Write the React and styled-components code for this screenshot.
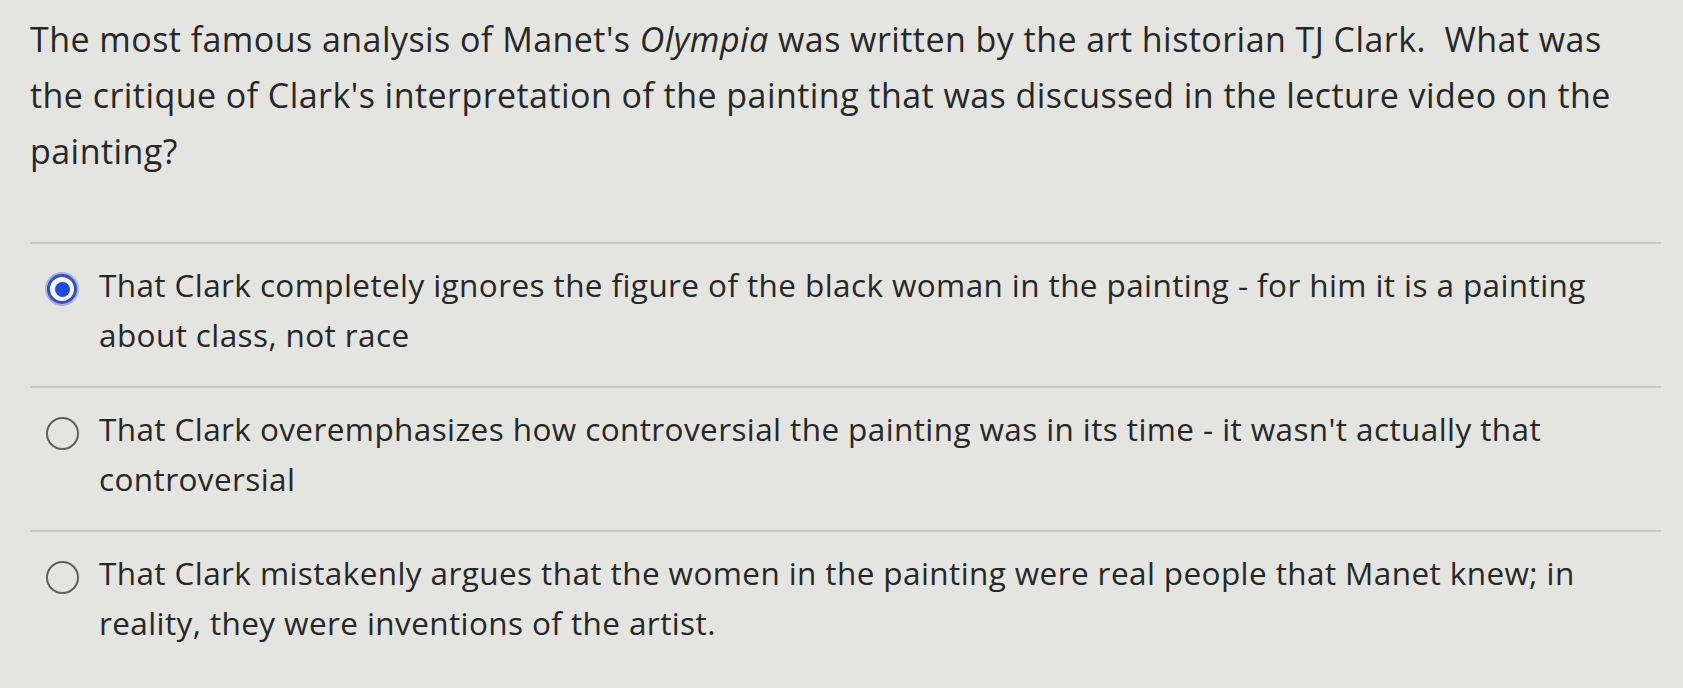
import React from 'react';
import styled, { createGlobalStyle } from 'styled-components';

const GlobalStyle = createGlobalStyle`
  html, body {
    margin: 0;
    padding: 0;
    background: #e4e4e1;
  }
  body {
    font-family: "Open Sans", "Liberation Sans", sans-serif;
    color: #272727;
  }
`

const Container = styled.div`
  width: 1683px;
  height: 688px;
  box-sizing: border-box;
  padding: 11px 22px 0 30px;
  overflow: hidden;
`

const Question = styled.div`
  font-size: 34px;
  line-height: 56px;
  letter-spacing: 0.45px;
  padding-right: 10px;
  margin-bottom: 63px;
`

const OptionList = styled.div`
  display: flex;
  flex-direction: column;
`

const Option = styled.label`
  display: flex;
  align-items: flex-start;
  border-top: 2px solid #c6c6c3;
  padding: 16px 20px 26px 15px;
  font-size: 31.5px;
  line-height: 50px;
  letter-spacing: 0.4px;
  cursor: pointer;
`

const RadioBox = styled.span`
  flex: 0 0 auto;
  width: 34px;
  height: 50px;
  margin-top: 4px;
  margin-right: 20px;
  display: flex;
  align-items: center;
  justify-content: center;
`

const Radio = styled.span`
  box-sizing: border-box;
  width: ${props => props.$checked ? '30px' : '33px'};
  height: ${props => props.$checked ? '30px' : '33px'};
  border-radius: 50%;
  border: ${props => props.$checked ? '3px solid #3b50b4' : '2px solid #5e5e5e'};
  background: ${props => props.$checked ? '#f5f5f8' : 'transparent'};
  box-shadow: ${props => props.$checked ? '0 0 0 2px #a3b2e4' : 'none'};
  display: flex;
  align-items: center;
  justify-content: center;
`

const Dot = styled.span`
  width: 15px;
  height: 15px;
  border-radius: 50%;
  background: #1b4de0;
`

const OptionText = styled.span``

const options = [
  'That Clark completely ignores the figure of the black woman in the painting - for him it is a painting about class, not race',
  "That Clark overemphasizes how controversial the painting was in its time - it wasn't actually that controversial",
  "That Clark mistakenly argues that the women in the painting were real people that Manet knew; in reality, they were inventions of the artist.",
]

const App = () => {
  return (
    <Container>
      <GlobalStyle/>
      <Question>
        The most famous analysis of Manet's <i>Olympia</i> was written by the art historian TJ Clark.&nbsp; What was the critique of Clark's interpretation of the painting that was discussed in the lecture video on the painting?
      </Question>
      <OptionList>
        {options.map((text, i) => (
          <Option key={i}>
            <RadioBox>
              <Radio $checked={i === 0}>
                {i === 0 && <Dot/>}
              </Radio>
            </RadioBox>
            <OptionText>{text}</OptionText>
          </Option>
        ))}
      </OptionList>
    </Container>
  )
}

export default App;
